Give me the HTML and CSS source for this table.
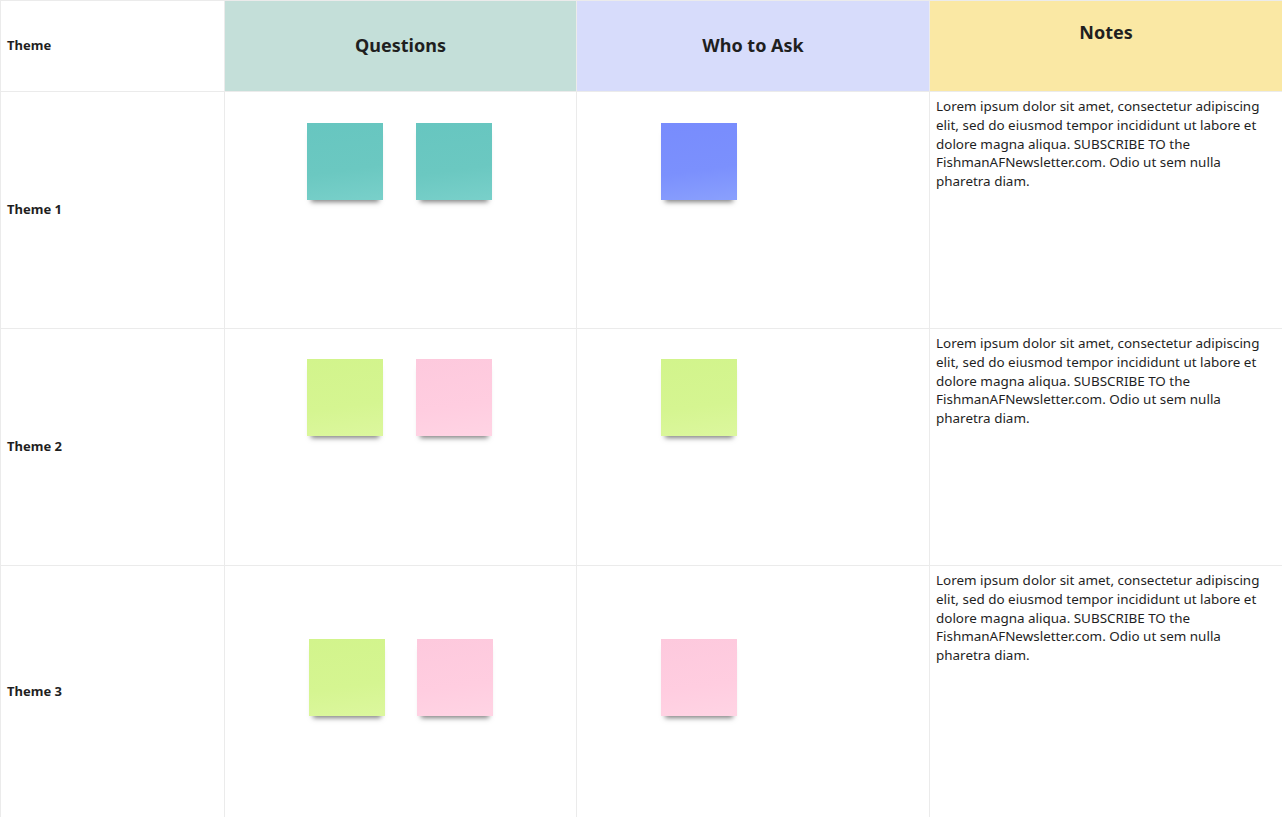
FILE: index.html
```html
<!DOCTYPE html>
<html>
<head>
<meta charset="utf-8">
<link rel="stylesheet" href="styles.css">
</head>
<body>
<div class="board">
  <div class="cell head-theme">Theme</div>
  <div class="cell head head-q">Questions</div>
  <div class="cell head head-w">Who to Ask</div>
  <div class="cell head head-n">Notes</div>

  <div class="cell theme">Theme 1</div>
  <div class="cell notes-area r1 q"><div class="sticky teal"></div><div class="sticky teal"></div></div>
  <div class="cell notes-area r1 w"><div class="sticky blue"></div></div>
  <div class="cell text">Lorem ipsum dolor sit amet, consectetur adipiscing elit, sed do eiusmod tempor incididunt ut labore et dolore magna aliqua. SUBSCRIBE TO the FishmanAFNewsletter.com. Odio ut sem nulla pharetra diam.</div>

  <div class="cell theme">Theme 2</div>
  <div class="cell notes-area r2 q"><div class="sticky green"></div><div class="sticky pink"></div></div>
  <div class="cell notes-area r2 w"><div class="sticky green"></div></div>
  <div class="cell text">Lorem ipsum dolor sit amet, consectetur adipiscing elit, sed do eiusmod tempor incididunt ut labore et dolore magna aliqua. SUBSCRIBE TO the FishmanAFNewsletter.com. Odio ut sem nulla pharetra diam.</div>

  <div class="cell theme">Theme 3</div>
  <div class="cell notes-area r3 q3"><div class="sticky green"></div><div class="sticky pink"></div></div>
  <div class="cell notes-area r3 w"><div class="sticky pink"></div></div>
  <div class="cell text">Lorem ipsum dolor sit amet, consectetur adipiscing elit, sed do eiusmod tempor incididunt ut labore et dolore magna aliqua. SUBSCRIBE TO the FishmanAFNewsletter.com. Odio ut sem nulla pharetra diam.</div>
</div>
</body>
</html>
```

FILE: styles.css
```css
html, body {
  margin: 0;
  padding: 0;
  background: #ffffff;
  overflow: hidden;
}
body {
  font-family: "Noto Sans", "Open Sans", sans-serif;
  color: #1f1f1f;
}
.board {
  display: grid;
  grid-template-columns: 223px 351px 352px 352px;
  grid-template-rows: 90px 236px 236px 251px;
  gap: 1px;
  padding: 1px 0 0 1px;
  background: #ebebeb;
  width: 1282px;
}
.cell {
  background: #ffffff;
  box-sizing: border-box;
}
.head-theme {
  display: flex;
  align-items: center;
  padding-left: 6px;
  font-size: 13px;
  font-weight: 700;
  padding-bottom: 2px;
}
.head {
  display: flex;
  justify-content: center;
  align-items: center;
  font-size: 18px;
  font-weight: 700;
  padding-bottom: 2px;
}
.head-q { background: #c4dfd9; }
.head-w { background: #d7dcfb; }
.head-n {
  background: #fae8a4;
  align-items: flex-start;
  padding-top: 19px;
}
.theme {
  display: flex;
  align-items: center;
  padding-left: 6px;
  font-size: 13px;
  font-weight: 700;
  padding-bottom: 2px;
}
.text {
  padding: 5px 8px 0 6px;
  font-size: 13.45px;
  line-height: 18.75px;
  color: #1f1f1f;
}
.notes-area {
  display: flex;
  align-items: flex-start;
  gap: 33px;
}
.notes-area.q { padding-left: 82px; }
.notes-area.q3 { padding-left: 84px; gap: 32px; }
.notes-area.w { padding-left: 84px; }
.notes-area.r1 { padding-top: 31px; }
.notes-area.r2 { padding-top: 30px; }
.notes-area.r3 { padding-top: 73px; }
.sticky {
  width: 76px;
  height: 77px;
  flex: none;
  box-shadow: 0 6px 5px -4px rgba(0, 0, 0, 0.5);
}
.teal { background: linear-gradient(172deg, #67c6c0 0%, #6bc8c1 60%, #79d0ca 100%); }
.blue { background: linear-gradient(172deg, #788cfd 0%, #7b90fd 60%, #8aa0fd 100%); }
.green { background: linear-gradient(172deg, #d2f48c 0%, #d5f591 60%, #dcf79e 100%); }
.pink { background: linear-gradient(172deg, #fdc9dd 0%, #ffcde0 60%, #ffd4e4 100%); }
```
